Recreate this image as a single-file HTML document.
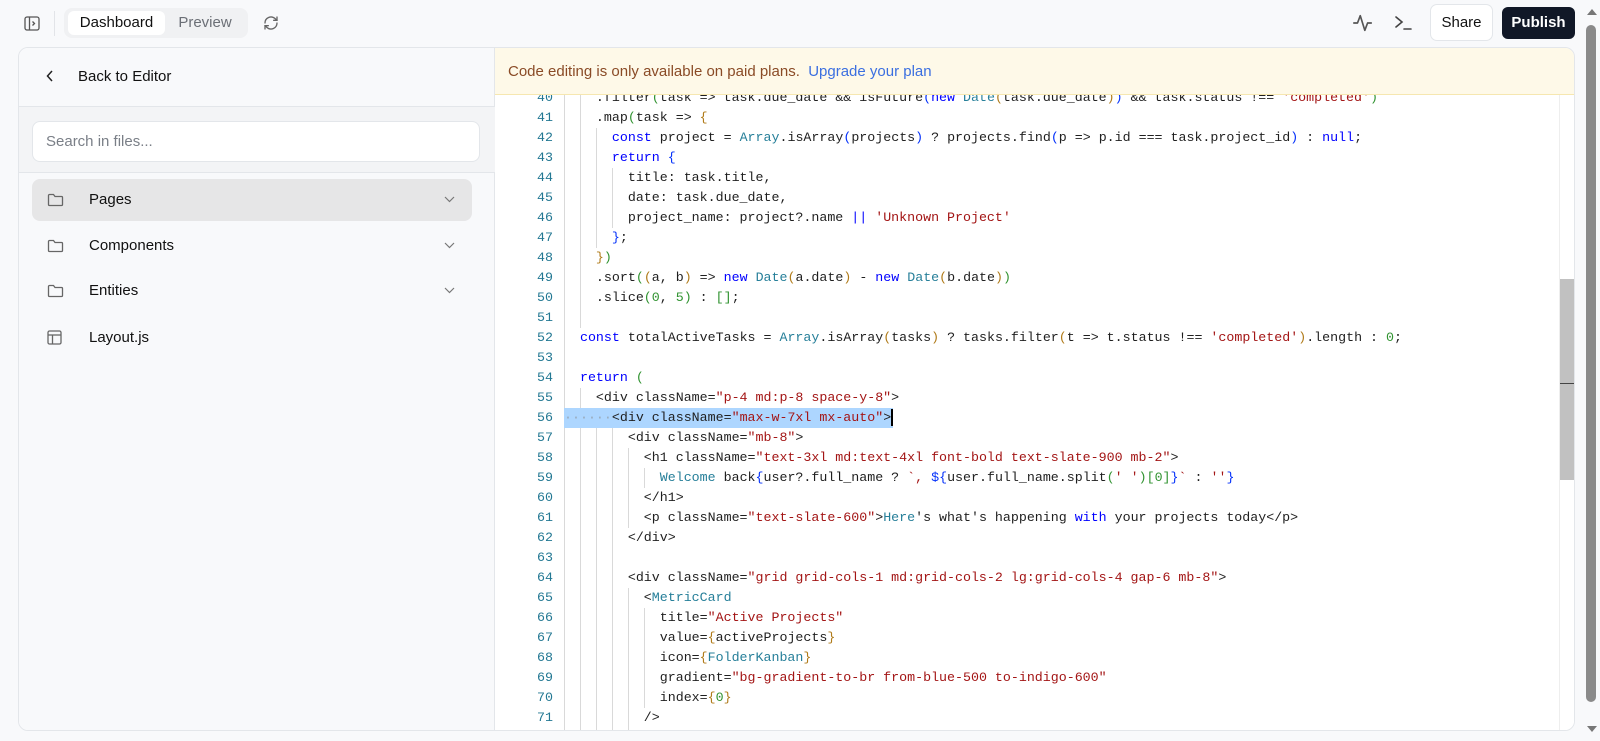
<!DOCTYPE html>
<html><head><meta charset="utf-8"><style>
*{box-sizing:border-box;margin:0;padding:0}
body{width:1600px;height:741px;overflow:hidden;background:#f8f9fb;font-family:"Liberation Sans",sans-serif;color:#111;position:relative}
.abs{position:absolute}
.tabs{left:64px;top:8px;width:184px;height:30px;background:#f0f1f3;border-radius:8px}
.tab{position:absolute;top:3px;height:24px;font-size:15px;line-height:24px;text-align:center}
.panel{left:18px;top:47px;width:1557px;height:684px;background:#fff;border:1px solid #e3e6ea;border-radius:10px;overflow:hidden}
.side{left:0;top:0;width:476px;height:684px;background:#f8f9fb;border-right:1px solid #e3e6ea}
.row{position:absolute;left:13px;width:436px;height:42px;border-radius:8px;font-size:15px;line-height:42px}
.row .lbl{position:absolute;left:57px;top:0}
.row svg{position:absolute}
.banner{left:476px;top:0;width:1081px;height:47px;background:#fef9e8;border-bottom:1px solid #f6e7b0;font-size:15px;line-height:47px;padding-left:13px;color:#8a4b26}
.code{left:476px;top:47px;width:1081px;height:637px;background:#fff;overflow:hidden;font-family:"Liberation Mono",monospace;font-size:13.3px}
.ln{position:absolute;left:0;width:58px;text-align:right;color:#237893;height:20px;line-height:20px}
.cl{position:absolute;left:69px;height:20px;line-height:20px;white-space:pre;color:#1f1f1f;background-repeat:no-repeat}
.k{color:#0000ff}.s{color:#a31515}.t{color:#267f99}.g{color:#319331}.y{color:#b07b1a}.b{color:#0431fa}
</style></head><body>
<svg class="abs" style="left:24px;top:16px" width="16" height="15" viewBox="0 0 16 15" fill="none" stroke="#555" stroke-width="1.3"><rect x="1" y="1" width="14" height="13" rx="2"/><line x1="5.5" y1="1" x2="5.5" y2="14"/><path d="M8.5 5.5l2 2-2 2"/></svg>
<div class="abs" style="left:54px;top:11px;width:1px;height:25px;background:#e2e4e8"></div>
<div class="abs tabs"><div class="tab" style="left:4px;width:97px;background:#fff;border-radius:6px;color:#111">Dashboard</div><div class="tab" style="left:101px;width:80px;color:#6b6f76">Preview</div></div>
<svg class="abs" style="left:263px;top:15px" width="16" height="16" viewBox="0 0 24 24" fill="none" stroke="#666" stroke-width="2" stroke-linecap="round"><path d="M3 12a9 9 0 0 1 15-6.7L21 8"/><path d="M21 3v5h-5"/><path d="M21 12a9 9 0 0 1-15 6.7L3 16"/><path d="M8 16H3v5"/></svg>
<svg class="abs" style="left:1352px;top:12px" width="22" height="22" viewBox="0 0 24 24" fill="none" stroke="#555" stroke-width="1.8" stroke-linecap="round" stroke-linejoin="round"><path d="M2 12h4l3-8 5 16 3-8h4"/></svg>
<svg class="abs" style="left:1394px;top:14px" width="20" height="18" viewBox="0 0 20 18" fill="none" stroke="#444" stroke-width="1.6" stroke-linecap="round"><path d="M2 3l6 5-6 5"/><path d="M10 15h7"/></svg>
<div class="abs" style="left:1430px;top:4px;width:63px;height:37px;background:#fff;border:1px solid #e3e6ea;border-radius:7px;font-size:15px;line-height:35px;text-align:center;color:#111">Share</div>
<div class="abs" style="left:1502px;top:7px;width:73px;height:32px;background:#111827;border-radius:6px;font-size:15px;font-weight:bold;line-height:32px;text-align:center;color:#fff">Publish</div>
<div class="abs" style="left:1586px;top:25px;width:10px;height:677px;background:#8a8a8a;border-radius:5px"></div>
<div class="abs" style="left:1587px;top:9px;width:0;height:0;border-left:5px solid transparent;border-right:5px solid transparent;border-bottom:6px solid #777"></div>
<div class="abs" style="left:1587px;top:726px;width:0;height:0;border-left:5px solid transparent;border-right:5px solid transparent;border-top:6px solid #777"></div>

<div class="abs panel">
 <div class="abs side">
  <svg class="abs" style="left:27px;top:22px" width="8" height="12" viewBox="0 0 8 12" fill="none" stroke="#222" stroke-width="1.5"><path d="M6 1L1.5 6 6 11"/></svg>
  <div class="abs" style="left:59px;top:20px;font-size:15px;color:#111">Back to Editor</div>
  <div class="abs" style="left:0;top:58px;width:476px;height:67px;background:#f3f4f6;border-top:1px solid #e3e6ea;border-bottom:1px solid #e3e6ea"></div>
  <div class="abs" style="left:13px;top:73px;width:448px;height:41px;background:#fff;border:1px solid #e3e6ea;border-radius:8px;font-size:15px;line-height:39px;padding-left:13px;color:#7a7f87">Search in files...</div>
  <div class="row" style="top:131px;background:#e6e6e7;width:440px"><svg style="left:15px;top:14px" width="17" height="14" viewBox="0 0 17 14" fill="none" stroke="#666" stroke-width="1.3"><path d="M1.5 2.5a1 1 0 0 1 1-1h4l1.5 2h6.5a1 1 0 0 1 1 1v7a1 1 0 0 1-1 1h-12a1 1 0 0 1-1-1z"/></svg><span class="lbl">Pages</span><svg style="left:412px;top:17px" width="11" height="7" viewBox="0 0 11 7" fill="none" stroke="#777" stroke-width="1.2"><path d="M1 1l4.5 4.5L10 1"/></svg></div>
  <div class="row" style="top:177px"><svg style="left:15px;top:14px" width="17" height="14" viewBox="0 0 17 14" fill="none" stroke="#666" stroke-width="1.3"><path d="M1.5 2.5a1 1 0 0 1 1-1h4l1.5 2h6.5a1 1 0 0 1 1 1v7a1 1 0 0 1-1 1h-12a1 1 0 0 1-1-1z"/></svg><span class="lbl">Components</span><svg style="left:412px;top:17px" width="11" height="7" viewBox="0 0 11 7" fill="none" stroke="#777" stroke-width="1.2"><path d="M1 1l4.5 4.5L10 1"/></svg></div>
  <div class="row" style="top:222px"><svg style="left:15px;top:14px" width="17" height="14" viewBox="0 0 17 14" fill="none" stroke="#666" stroke-width="1.3"><path d="M1.5 2.5a1 1 0 0 1 1-1h4l1.5 2h6.5a1 1 0 0 1 1 1v7a1 1 0 0 1-1 1h-12a1 1 0 0 1-1-1z"/></svg><span class="lbl">Entities</span><svg style="left:412px;top:17px" width="11" height="7" viewBox="0 0 11 7" fill="none" stroke="#777" stroke-width="1.2"><path d="M1 1l4.5 4.5L10 1"/></svg></div>
  <div class="row" style="top:269px"><svg style="left:15px;top:13px" width="15" height="15" viewBox="0 0 15 15" fill="none" stroke="#666" stroke-width="1.3"><rect x="1" y="1" width="13" height="13" rx="1.5"/><line x1="1" y1="5" x2="14" y2="5"/><line x1="5.5" y1="5" x2="5.5" y2="14"/></svg><span class="lbl">Layout.js</span></div>
 </div>
 <div class="abs banner">Code editing is only available on paid plans.&nbsp; <span style="color:#3b6fe0">Upgrade your plan</span></div>
 <div class="abs code" id="code">
  <div class="abs" style="left:1064px;top:0;width:1px;height:637px;background:#eee"></div>
 </div>
 <div class="abs" style="left:1541px;top:231px;width:15px;height:201px;background:#c1c1c1"></div>
 <div class="abs" style="left:1541px;top:335px;width:15px;height:1px;background:#444"></div>
</div>
<script>
(function(){
var L=[
[4,'.filter<span class="g">(</span>task =&gt; task.due_date &amp;&amp; isFuture<span class="b">(</span><span class="k">new</span> <span class="t">Date</span><span class="y">(</span>task.due_date<span class="y">)</span><span class="b">)</span> &amp;&amp; task.status !== <span class="s">\'completed\'</span><span class="g">)</span>'],
[4,'.map<span class="g">(</span>task =&gt; <span class="y">{</span>'],
[6,'<span class="k">const</span> project = <span class="t">Array</span>.isArray<span class="b">(</span>projects<span class="b">)</span> ? projects.find<span class="b">(</span>p =&gt; p.id === task.project_id<span class="b">)</span> : <span class="k">null</span>;'],
[6,'<span class="k">return</span> <span class="b">{</span>'],
[8,'title: task.title,'],
[8,'date: task.due_date,'],
[8,'project_name: project?.name <span class="k">||</span> <span class="s">\'Unknown Project\'</span>'],
[6,'<span class="b">}</span>;'],
[4,'<span class="y">}</span><span class="g">)</span>'],
[4,'.sort<span class="g">(</span><span class="y">(</span>a, b<span class="y">)</span> =&gt; <span class="k">new</span> <span class="t">Date</span><span class="y">(</span>a.date<span class="y">)</span> - <span class="k">new</span> <span class="t">Date</span><span class="y">(</span>b.date<span class="y">)</span><span class="g">)</span>'],
[4,'.slice<span class="g">(</span><span class="g">0</span>, <span class="g">5</span><span class="g">)</span> : <span class="g">[]</span>;'],
[4,''],
[2,'<span class="k">const</span> totalActiveTasks = <span class="t">Array</span>.isArray<span class="y">(</span>tasks<span class="y">)</span> ? tasks.filter<span class="y">(</span>t =&gt; t.status !== <span class="s">\'completed\'</span><span class="y">)</span>.length : <span class="g">0</span>;'],
[2,''],
[2,'<span class="k">return</span> <span class="g">(</span>'],
[4,'&lt;div className=<span class="s">"p-4 md:p-8 space-y-8"</span>&gt;'],
[6,'&lt;div className=<span class="s">"max-w-7xl mx-auto"</span>&gt;'],
[8,'&lt;div className=<span class="s">"mb-8"</span>&gt;'],
[10,'&lt;h1 className=<span class="s">"text-3xl md:text-4xl font-bold text-slate-900 mb-2"</span>&gt;'],
[12,'<span class="t">Welcome</span> back<span class="b">{</span>user?.full_name ? <span class="s">`, </span><span class="b">${</span>user.full_name.split<span class="g">(</span><span class="s">\' \'</span><span class="g">)</span><span class="g">[0]</span><span class="b">}</span><span class="s">`</span> : <span class="s">\'\'</span><span class="b">}</span>'],
[10,'&lt;/h1&gt;'],
[10,'&lt;p className=<span class="s">"text-slate-600"</span>&gt;<span class="t">Here</span>\'s what\'s happening <span class="k">with</span> your projects today&lt;/p&gt;'],
[8,'&lt;/div&gt;'],
[8,''],
[8,'&lt;div className=<span class="s">"grid grid-cols-1 md:grid-cols-2 lg:grid-cols-4 gap-6 mb-8"</span>&gt;'],
[10,'&lt;<span class="t">MetricCard</span>'],
[12,'title=<span class="s">"Active Projects"</span>'],
[12,'value=<span class="y">{</span>activeProjects<span class="y">}</span>'],
[12,'icon=<span class="y">{</span><span class="t">FolderKanban</span><span class="y">}</span>'],
[12,'gradient=<span class="s">"bg-gradient-to-br from-blue-500 to-indigo-600"</span>'],
[12,'index=<span class="y">{</span><span class="g">0</span><span class="y">}</span>'],
[10,'/&gt;'],
[10,'&lt;<span class="t">MetricCard</span>']
];
var c=document.getElementById('code'),h='';
for(var i=0;i<L.length;i++){var yy=-7+i*20;var ind=L[i][0];
 var sp='';for(var j=0;j<ind;j++)sp+=' ';
 var bg='background-image:repeating-linear-gradient(to right,#d9d9d9 0px,#d9d9d9 1px,transparent 1px,transparent 16px);background-size:'+(ind*8)+'px 100%;';
 if(i==16){bg='background:#add6ff;';}
 h+='<div class="ln" style="top:'+yy+'px">'+(40+i)+'</div>';
 h+='<div class="cl" style="top:'+yy+'px;'+bg+'">'+(i==16?'<span style="color:#9ab">\u00b7\u00b7\u00b7\u00b7\u00b7\u00b7</span>':sp)+L[i][1]+(i==16?'<span style="display:inline-block;width:2px;height:17px;background:#000;vertical-align:middle"></span>':'')+'</div>';
}
c.insertAdjacentHTML('beforeend',h);
})();
</script>
</body></html>
